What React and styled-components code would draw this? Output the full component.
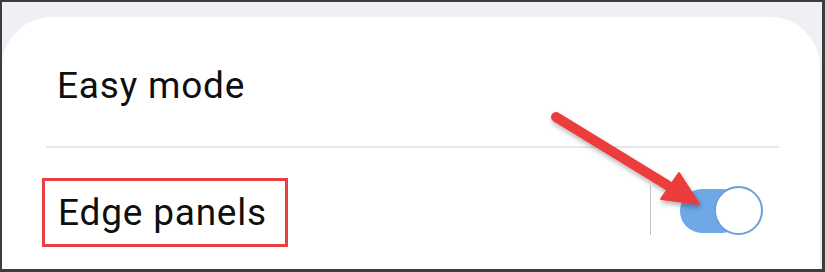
import React from "react";
import styled, { createGlobalStyle } from "styled-components";

const Global = createGlobalStyle`
  html, body { margin: 0; padding: 0; background: #ffffff; }
  * { box-sizing: border-box; }
`;

const Frame = styled.div`
  position: relative;
  width: 825px;
  height: 272px;
  border-style: solid;
  border-color: #3d3d3f;
  border-width: 2px 3px 3px 2px;
  background: #eff0f4;
  display: flex;
  flex-direction: column;
  overflow: hidden;
  font-family: Roboto, "Noto Sans", Arial, sans-serif;
`;

const Card = styled.div`
  margin: 15px 2px 0 0;
  flex: 1;
  background: #ffffff;
  border-radius: 50px 50px 0 0;
  display: flex;
  flex-direction: column;
`;

const Row = styled.div`
  display: flex;
  align-items: center;
  padding: ${(p) => p.$pad};
`;

const Title = styled.span`
  font-size: 37px;
  line-height: 37px;
  color: #0f0f0f;
  font-weight: 400;
  letter-spacing: 0.8px;
`;

const Divider = styled.div`
  height: 2px;
  background: #e7e7e9;
  margin: 0 41px 0 44px;
`;

const Highlight = styled.div`
  display: flex;
  align-items: center;
  height: 69px;
  padding: 0 18px 0 13px;
  border: 3px solid #e8413f;
`;

const Spacer = styled.div`
  flex: 1;
`;

const VLine = styled.div`
  width: 1px;
  height: 50px;
  background: #c2c2c2;
  margin-bottom: 6px;
`;

const Toggle = styled.div`
  position: relative;
  width: 83px;
  height: 49px;
  margin: 0 57px 4px 29px;
`;

const Track = styled.div`
  position: absolute;
  left: 0;
  top: 3px;
  width: 64px;
  height: 44px;
  border-radius: 22px;
  background: #6ea8e6;
`;

const Thumb = styled.div`
  position: absolute;
  right: 0;
  top: 0;
  width: 49px;
  height: 49px;
  border-radius: 50%;
  background: #ffffff;
  border: 2px solid #6e9fd6;
`;

const ArrowLayer = styled.svg`
  position: absolute;
  left: 0;
  top: 0;
  pointer-events: none;
`;

export default function App() {
  return (
    <>
      <Global />
      <Frame>
        <Card>
          <Row $pad="50px 0 42px 55px">
            <Title>Easy mode</Title>
          </Row>
          <Divider />
          <Row $pad="30px 0 0 40px">
            <Highlight>
              <Title>Edge panels</Title>
            </Highlight>
            <Spacer />
            <VLine />
            <Toggle>
              <Track />
              <Thumb />
            </Toggle>
          </Row>
        </Card>
        <ArrowLayer width="825" height="272" viewBox="-2 -2 825 272">
          <defs>
            <filter id="sh" x="-20%" y="-20%" width="140%" height="140%">
              <feDropShadow dx="1" dy="3" stdDeviation="2.5" floodColor="#000" floodOpacity="0.3" />
            </filter>
          </defs>
          <g filter="url(#sh)" fill="#ec3c3c" stroke="#ec3c3c">
            <line x1="552" y1="113" x2="668" y2="184" strokeWidth="10" strokeLinecap="round" />
            <polygon points="657,195 675,169 695,200" strokeWidth="2" strokeLinejoin="round" />
          </g>
        </ArrowLayer>
      </Frame>
    </>
  );
}
